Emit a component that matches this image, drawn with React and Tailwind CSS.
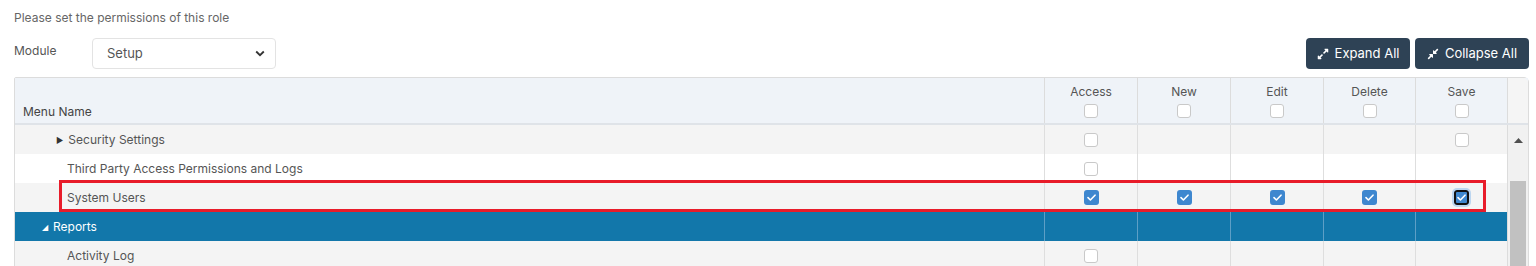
import { FaExpandAlt, FaCompressAlt } from 'react-icons/fa'

const COLS = [
  { key: 'access', label: 'Access', w: 'w-[93px]' },
  { key: 'new', label: 'New', w: 'w-[93px]' },
  { key: 'edit', label: 'Edit', w: 'w-[93px]' },
  { key: 'delete', label: 'Delete', w: 'w-[92px]' },
  { key: 'save', label: 'Save', w: 'w-[92px]' },
]

const ROWS = [
  { name: 'Security Settings', indent: 'pl-[41px]', caret: 'right', bg: 'bg-[#f4f4f4]', boxes: { access: 0, save: 0 } },
  { name: 'Third Party Access Permissions and Logs', indent: 'pl-[52px]', bg: 'bg-white', boxes: { access: 0 } },
  { name: 'System Users', indent: 'pl-[52px]', bg: 'bg-[#f4f4f4]', boxes: { access: 1, new: 1, edit: 1, delete: 1, save: 2 } },
  { name: 'Reports', indent: 'pl-[27px]', caret: 'down', bg: 'bg-[#1277aa]', group: true, boxes: {} },
  { name: 'Activity Log', indent: 'pl-[52px]', bg: 'bg-[#f4f4f4]', boxes: { access: 0 } },
]

function Box({ state }) {
  if (state === undefined) return null
  if (state === 0) {
    return <span className="inline-block w-[14px] h-[14px] rounded-[3px] border border-[#c9c9c9] bg-white" />
  }
  return (
    <span className={`inline-flex items-center justify-center w-[15px] h-[15px] rounded-[3px] bg-[#3e87cf] ${state === 2 ? 'ring-2 ring-[#111] ring-inset outline outline-2 outline-[#bcd6f0]' : ''}`}>
      <svg width="9" height="7" viewBox="0 0 9 7" fill="none">
        <path d="M1 3.6 L3.4 6 L8 1.2" stroke="white" strokeWidth="1.6" strokeLinecap="round" strokeLinejoin="round" />
      </svg>
    </span>
  )
}

function Row({ r }) {
  const txt = r.group ? 'text-white' : 'text-[#555]'
  const line = r.group ? 'border-[#5d9fc6]' : 'border-[#dedede]'
  return (
    <div className={`flex h-[29px] ${r.bg}`}>
      <div className={`w-[1029px] flex items-center ${r.indent} ${txt} text-[12px]`}>
        {r.caret === 'right' && <span className="text-[8px] mr-[5px] text-[#333]">▶</span>}
        {r.caret === 'down' && <span className="text-[8px] mr-[5px] text-white">◢</span>}
        {r.name}
      </div>
      {COLS.map(c => (
        <div key={c.key} className={`${c.w} flex items-center justify-center border-l ${line}`}>
          <Box state={r.boxes[c.key]} />
        </div>
      ))}
    </div>
  )
}

export default function App() {
  return (
    <div className="w-[1536px] h-[266px] overflow-hidden bg-white text-[#555]" style={{ fontFamily: 'Inter, "Noto Sans", sans-serif' }}>
      <div className="pl-[14px] pt-[10px] text-[12px] text-[#666] leading-[16px]">Please set the permissions of this role</div>

      <div className="flex items-center pl-[14px] pr-[7px] mt-[12px] h-[31px]">
        <div className="w-[78px] text-[12px] text-[#555] -mt-[6px]">Module</div>
        <div className="w-[184px] h-[31px] border border-[#e3e3e3] rounded-[4px] flex items-center justify-between pl-[14px] pr-[10px] text-[13px] text-[#555]">
          Setup
          <svg width="10" height="7" viewBox="0 0 10 7"><path d="M1.2 1.5 L5 5.2 L8.8 1.5" stroke="#333" strokeWidth="1.8" fill="none" /></svg>
        </div>
        <div className="ml-auto flex gap-[5px]">
          <button className="h-[31px] w-[104px] rounded-[4px] bg-[#2e4255] text-white text-[13px] flex items-center justify-center gap-[6px]">
            <FaExpandAlt className="text-[12px]" /> Expand All
          </button>
          <button className="h-[31px] w-[114px] rounded-[4px] bg-[#2e4255] text-white text-[13px] flex items-center justify-center gap-[6px]">
            <FaCompressAlt className="text-[12px]" /> Collapse All
          </button>
        </div>
      </div>

      <div className="relative ml-[14px] mt-[8px] w-[1515px] border border-[#dcdcdc] rounded-tr-[5px] rounded-tl-[2px]">
        <div className="flex h-[47px] bg-[#eff3f8] border-b-2 border-[#dfe3e8]">
          <div className="w-[1029px] flex items-end pl-[8px] pb-[3px] text-[12px] leading-[16px] text-[#444]">Menu Name</div>
          {COLS.map(c => (
            <div key={c.key} className={`${c.w} border-l border-[#dcdcdc] flex flex-col items-center pt-[7px] text-[12px] text-[#555]`}>
              <span className="leading-[14px]">{c.label}</span>
              <span className="mt-[5px] inline-block w-[14px] h-[14px] rounded-[3px] border border-[#c9c9c9] bg-white" />
            </div>
          ))}
          <div className="flex-1 border-l border-[#dcdcdc] bg-[#f5f5f5] rounded-tr-[5px]" />
        </div>

        <div className="flex">
          <div className="flex flex-col">
            {ROWS.map(r => <Row key={r.name} r={r} />)}
          </div>
          <div className="flex-1 bg-[#f1f1f1] border-l border-[#dcdcdc] flex flex-col items-center">
            <div className="h-[18px] flex items-end">
              <svg width="9" height="5" viewBox="0 0 9 5"><path d="M0 5 L4.5 0 L9 5 Z" fill="#505050" /></svg>
            </div>
            <div className="mt-[38px] w-[16px] flex-1 bg-[#c1c1c1]" />
          </div>
        </div>

        <div className="absolute left-[44px] top-[102px] w-[1427px] h-[32px] border-[3px] border-[#e81c2a] pointer-events-none" />
      </div>
    </div>
  )
}
